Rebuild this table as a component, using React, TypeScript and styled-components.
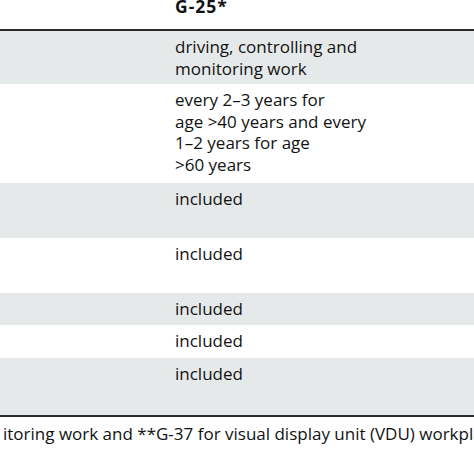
import React from "react";
import styled, { createGlobalStyle } from "styled-components";

const Global = createGlobalStyle`
  html, body { margin: 0; padding: 0; background: #ffffff; }
  body { width: 474px; height: 474px; overflow: hidden; }
  * { box-sizing: border-box; }
`;

const Page = styled.div`
  width: 474px;
  height: 474px;
  overflow: hidden;
  font-family: "Open Sans", "Noto Sans", sans-serif;
  color: #121212;
  font-size: 17px;
`;

const Table = styled.div`
  display: flex;
  flex-direction: column;
  width: 474px;
  border-bottom: 2px solid #2b2b2b;
`;

const HeadRow = styled.div`
  display: grid;
  grid-template-columns: 175px 1fr;
  height: 31px;
  border-bottom: 2px solid #2b2b2b;
`;

const HeadCell = styled.div`
  font-weight: 700;
  font-size: 17.5px;
  letter-spacing: 1px;
  line-height: 13.4px;
`;

const Row = styled.div<{ $shade: boolean; $h: number }>`
  display: grid;
  grid-template-columns: 175px 1fr;
  height: ${(p) => p.$h}px;
  background: ${(p) => (p.$shade ? "#e6e9ea" : "#ffffff")};
`;

const Cell = styled.div`
  padding-top: 5px;
  line-height: 21.5px;
`;

const Footnote = styled.div`
  white-space: nowrap;
  padding: 6px 0 0 3px;
  line-height: 22px;
`;

const rows: { text: React.ReactNode; h: number }[] = [
  { text: <>driving, controlling and<br />monitoring work</>, h: 53 },
  {
    text: (
      <>
        every 2–3 years for<br />age &gt;40 years and every<br />1–2 years for age<br />&gt;60 years
      </>
    ),
    h: 99,
  },
  { text: "included", h: 55 },
  { text: "included", h: 55 },
  { text: "included", h: 32 },
  { text: "included", h: 33 },
  { text: "included", h: 57 },
];

export default function App() {
  return (
    <Page>
      <Global />
      <Table>
        <HeadRow>
          <div />
          <HeadCell>G-25*</HeadCell>
        </HeadRow>
        {rows.map((r, i) => (
          <Row key={i} $shade={i % 2 === 0} $h={r.h}>
            <div />
            <Cell>{r.text}</Cell>
          </Row>
        ))}
      </Table>
      <Footnote>itoring work and **G-37 for visual display unit (VDU) workplaces.</Footnote>
    </Page>
  );
}
